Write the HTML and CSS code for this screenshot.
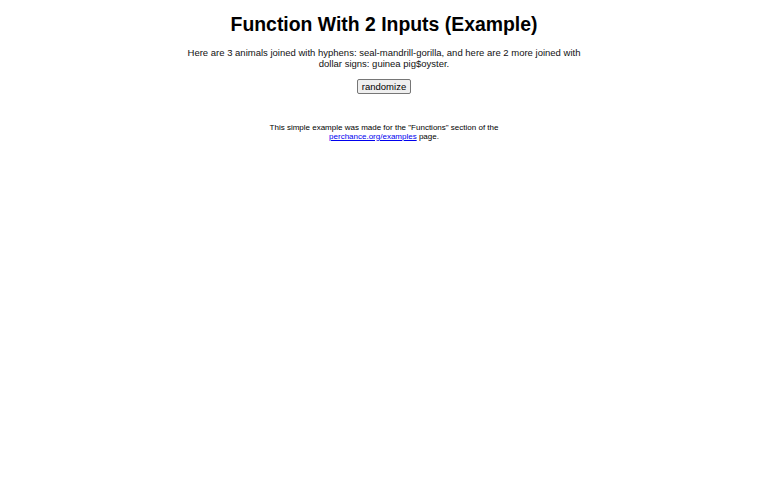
FILE: index.html
```html
<!DOCTYPE html>
<html>
<head>
<meta charset="utf-8">
<link rel="stylesheet" href="styles.css">
</head>
<body>
<h1 class="title">Function With 2 Inputs (Example)</h1>
<p class="output">Here are 3 animals joined with hyphens: seal-mandrill-gorilla, and here are 2 more joined with dollar signs: guinea pig$oyster.</p>
<button class="btn">randomize</button>
<p class="footer">This simple example was made for the "Functions" section of the <a href="#">perchance.org/examples</a> page.</p>
</body>
</html>
```
FILE: styles.css
```css
html, body { margin: 0; padding: 0; background: #fff; }
body {
  font-family: "Liberation Sans", Arial, sans-serif;
  text-align: center;
  color: #000;
}
.title {
  font-size: 19.4px;
  font-weight: bold;
  margin: 13px 0 0 0;
  line-height: 22px;
}
.output {
  font-size: 9.5px;
  line-height: 11px;
  width: 400px;
  margin: 12px auto 0 auto;
  color: #111;
}
.btn {
  display: inline-block;
  margin-top: 10px;
  font-family: "Liberation Sans", Arial, sans-serif;
  font-size: 9.5px;
  padding: 1px 4px;
  background: #efefef;
  border: 1px solid #767676;
  border-radius: 2px;
  color: #000;
}
.footer {
  font-size: 8px;
  line-height: 8.5px;
  width: 240px;
  margin: 30px auto 0 auto;
}
.footer a { color: #0000ee; }
```
